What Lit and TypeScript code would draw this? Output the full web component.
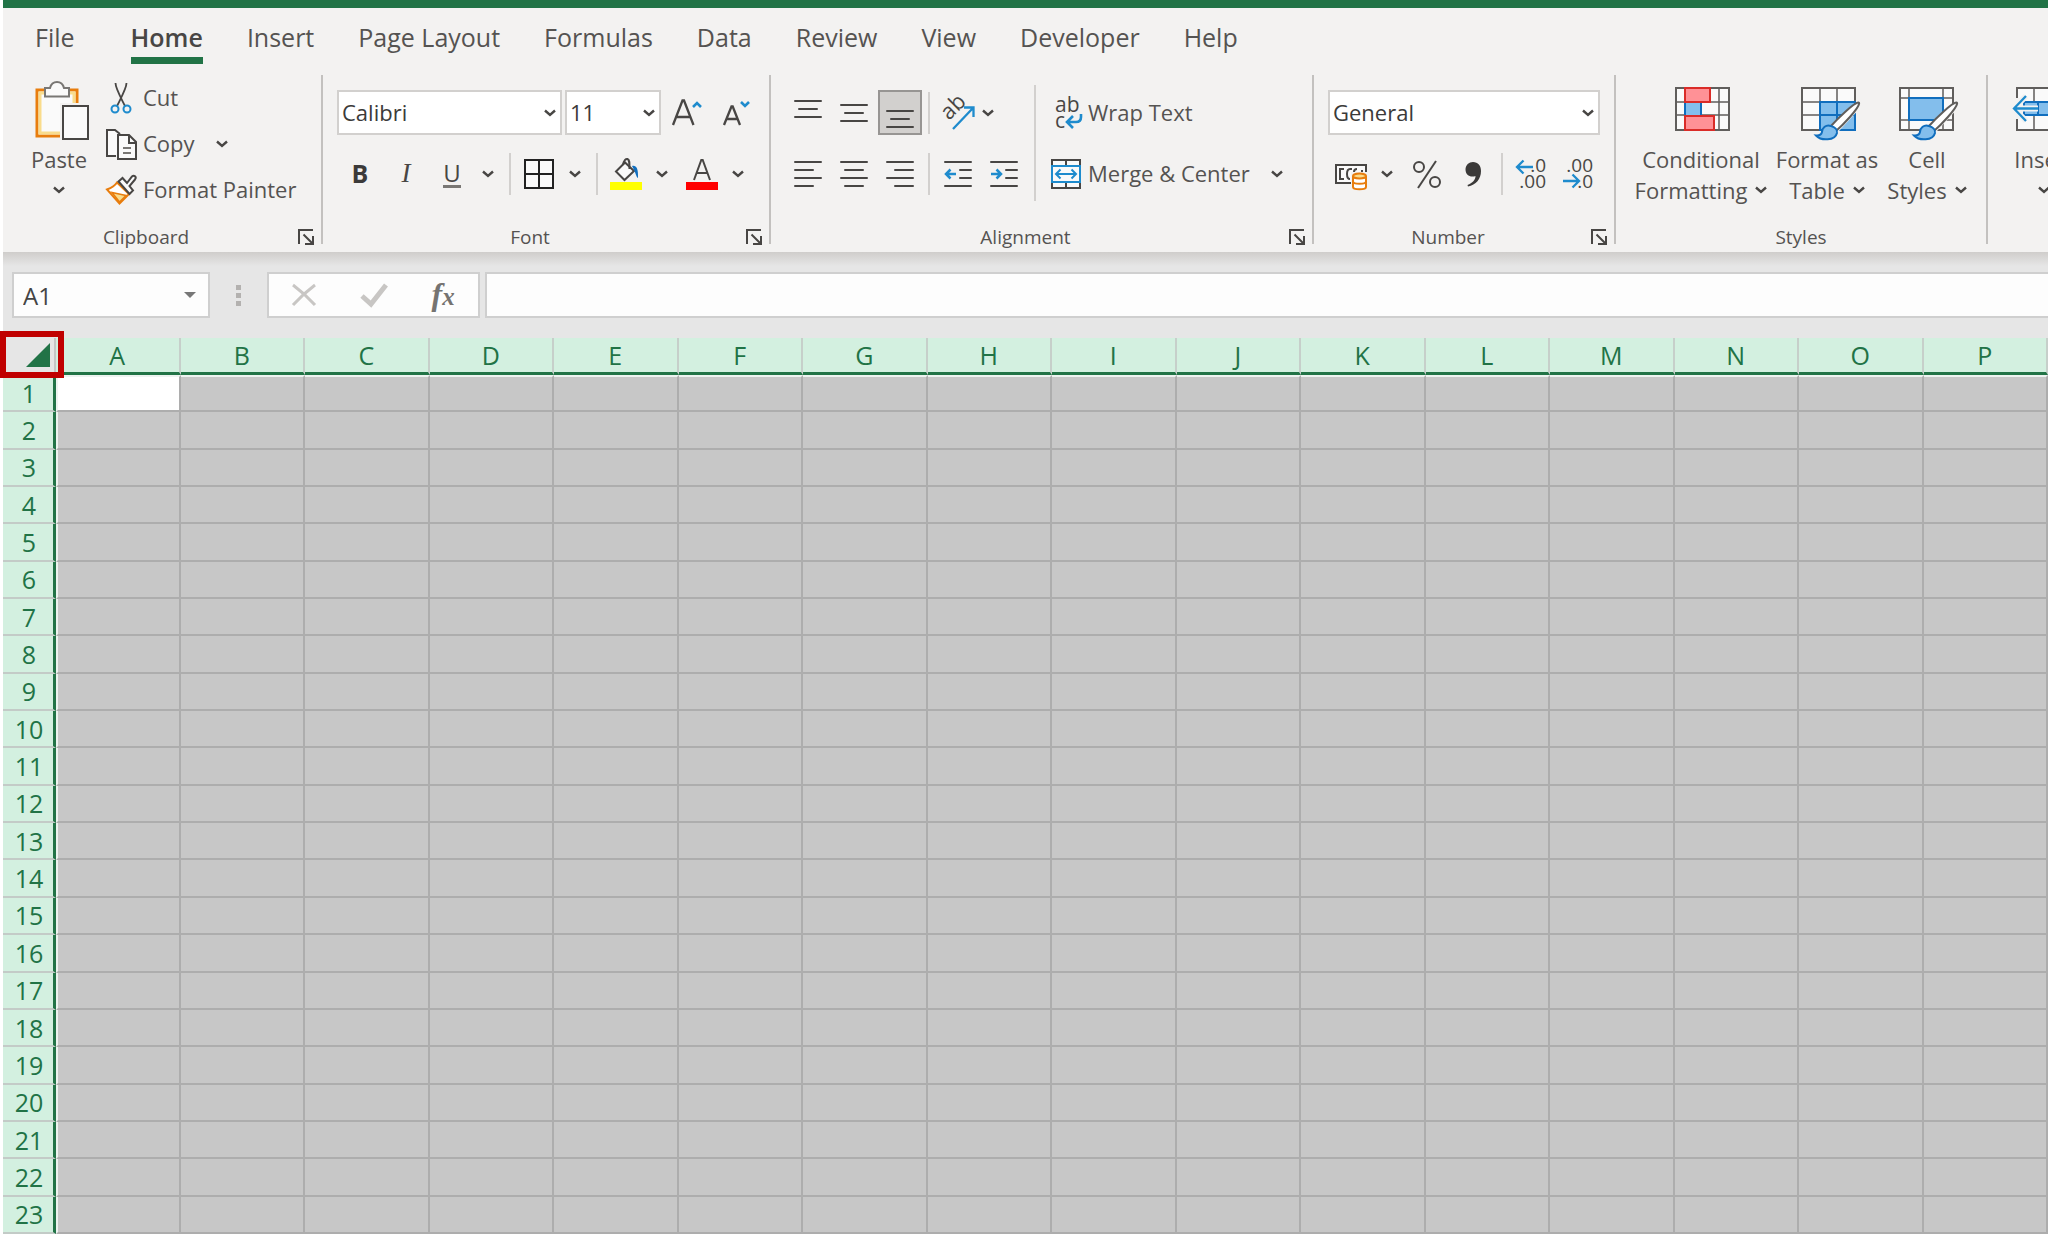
import { LitElement, html, svg, css, nothing, TemplateResult } from "lit";
import { customElement, property, state } from "lit/decorators.js";
import { classMap } from "lit/directives/class-map.js";

const INK = "#484644";
const BLUE = "#1e8bcd";
const GRID = "#605e5c";

const icon = (w: number, h: number, body: unknown) => html`<svg
  class="icon"
  width=${w}
  height=${h}
  viewBox="0 0 ${w} ${h}"
  fill="none"
  stroke=${INK}
  stroke-width="2"
  aria-hidden="true"
>${body}</svg>`;

const hLines = (rows: Array<[number, number, number]>) =>
  svg`${rows.map(([x1, x2, y]) => svg`<path d="M${x1} ${y}H${x2}" stroke-linecap="round"/>`)}`;

const brush = (dx: number) => svg`<g transform="translate(${dx} 0)">
  <path d="M62 20 L36 44 L30 47 Q25 49 24 55 L19 57 L30 62 L40 56 L42 50 L66 24Z" fill="#f3f2f1" stroke="none"/>
  <path d="M61 21.5 C57 22 41 37 34 45 L39 50 C47 43 61 28 62 23 C62.400 22 62 21.300 61 21.500Z" fill="#fff" stroke="${GRID}"/>
  <path d="M34 45 C29 43 25 47 25 51 Q24 55 19 54.500 C24 60 38 60 40 52 C40.500 49 38 46 34 45Z" fill="#83beec" stroke="#106ebe"/>
</g>`;

const icons: Record<string, TemplateResult> = {
  paste: icon(60, 60, svg`
    <rect x="8" y="9" width="40" height="46" fill="#fafafa" stroke="#e87d0d" stroke-width="3"/>
    <rect x="11" y="12" width="34" height="40" stroke="#f9dc8c" stroke-width="3"/>
    <path d="M16 15.500V7h5c1-4 3-6 7-6s6 2 7 6h5v8.500z" fill="#fafafa" stroke="#797774"/>
    <rect x="31" y="22" width="30" height="38" fill="#f3f2f1" stroke="none"/>
    <rect x="34" y="25" width="25" height="33" fill="#fafafa"/>`),
  cut: icon(32, 32, svg`
    <path d="M10.500 1c0 5 4 12 9.500 23M21.500 1c0 5-4 12-9.500 23" stroke-width="1.800"/>
    <circle cx="10" cy="27" r="3.500" stroke=${BLUE}/><circle cx="22" cy="27" r="3.500" stroke=${BLUE}/>`),
  copy: icon(32, 32, svg`
    <path d="M11 28H2V2h8l5 4" fill="#fafafa"/>
    <path d="M13 7h11l7 7v17H13z" fill="#fafafa"/><path d="M24 7v8h7"/>
    <path d="M18 20h8M18 25h8" stroke="#797774"/>`),
  painter: icon(32, 32, svg`
    <path d="M2 15.500Q9 13 12 8.500L24 20 14.500 29.500Z" fill="#fff" stroke="#e87d0d"/>
    <path d="M7 18.500l14 3-6.500 6.500z" fill="#f9dc8c" stroke="#e87d0d" stroke-width="1.500"/>
    <path d="M13.500 7.500l4-3.500 4.500 5 5-6.500c2-2 5 .500 3 3L24.500 12l3.500 4.500-3.500 3.500z" fill="#fafafa"/>`),
  grow: icon(32, 32, svg`
    <path d="M2 28L11.500 3.500h1.500L22.500 28M6 20h13" stroke-width="2.300"/>
    <path d="M22 10l4-4 4 4" stroke=${BLUE} stroke-width="2.600"/>`),
  shrink: icon(32, 32, svg`
    <path d="M4 28L11.500 9.500h1.200L20 28M7 22h10.500" stroke-width="2.300"/>
    <path d="M21 5l4 4 4-4" stroke=${BLUE} stroke-width="2.600"/>`),
  borders: icon(30, 30, svg`<rect x="1" y="1" width="28" height="28" fill="#fafafa" stroke="#222"/><path d="M15 1v28M1 15h28" stroke="#222"/>`),
  fill: icon(32, 32, svg`
    <path d="M6 13.500L15 4.500 24 13 14.500 22z" fill="#fafafa"/>
    <path d="M13 7c1-5 3-6.500 4.500-6 2 .700 2 3 2 10"/>
    <path d="M22 8c4-1 6.500 2 6 12-2-1-2-5-6-12z" fill="#106ebe" stroke="none"/>
    <rect x="0" y="24" width="32" height="8" fill="#ffff00" stroke="none"/>`),
  fontColor: icon(32, 32, svg`
    <path d="M8 22L15.300 2h1.400L24 22M11 15h10"/>
    <rect x="0" y="24" width="32" height="8" fill="#ff0000" stroke="none"/>`),
  top: icon(30, 32, hLines([[2, 28, 4], [6, 24, 12], [2, 28, 20]])),
  middle: icon(30, 32, hLines([[2, 28, 8], [6, 24, 16], [2, 28, 24]])),
  bottom: icon(30, 32, hLines([[2, 28, 14], [6, 24, 22], [2, 28, 30]])),
  left: icon(30, 32, hLines([[2, 28, 4], [2, 20, 12], [2, 28, 20], [2, 20, 28]])),
  center: icon(30, 32, hLines([[2, 28, 4], [6, 24, 12], [2, 28, 20], [6, 24, 28]])),
  right: icon(30, 32, hLines([[2, 28, 4], [10, 28, 12], [2, 28, 20], [10, 28, 28]])),
  outdent: icon(30, 32, svg`${hLines([[2, 28, 4], [17, 28, 12], [17, 28, 20], [2, 28, 28]])}
    <path d="M13 16H3M7.500 11.500L3 16l4.500 4.500" stroke=${BLUE} stroke-width="2.500"/>`),
  indent: icon(30, 32, svg`${hLines([[2, 28, 4], [17, 28, 12], [17, 28, 20], [2, 28, 28]])}
    <path d="M2 16H12M7.500 11.500L12 16l-4.500 4.500" stroke=${BLUE} stroke-width="2.500"/>`),
  orient: icon(34, 34, svg`
    <text x="8" y="25" transform="rotate(-45 8 25)" class="glyph" font-size="22">ab</text>
    <path d="M12 33L32 12M23 11.500h9.500V21" stroke=${BLUE} stroke-width="2.300"/>`),
  wrap: icon(32, 32, svg`
    <text x="5" y="15" class="glyph" font-size="21">ab</text><text x="5" y="31" class="glyph" font-size="21">c</text>
    <path d="M31 17v3q0 5-5 5h-8M23 19l-6 6 6 6" stroke=${BLUE} stroke-width="2.600"/>`),
  merge: icon(32, 32, svg`
    <rect x="2" y="2" width="28" height="28" fill="#fafafa"/><path d="M16 2v28"/>
    <rect x="2" y="8" width="28" height="16" fill="#fafafa" stroke=${BLUE}/>
    <path d="M6 16h20M10.500 11.500L6 16l4.500 4.500M21.500 11.500L26 16l-4.500 4.500" stroke=${BLUE}/>`),
  currency: icon(34, 32, svg`
    <rect x="2" y="7" width="30" height="18" fill="#fafafa"/>
    <path d="M10 11H6v10h4M18 11h-2q-3 0-3 5t3 5M20 14q0-3 3-3M28 12v3"/>
    <path d="M17 14h17v19H17z" fill="#f3f2f1" stroke="none"/>
    <path d="M19 18v11c0 3 13 3 13 0V18" fill="#fff" stroke="#e87d0d"/>
    <ellipse cx="25.500" cy="18" rx="6.500" ry="2.500" fill="#f9dc8c" stroke="#e87d0d"/>
    <path d="M19 23.500c0 3 13 3 13 0" stroke="#e87d0d"/>`),
  percent: icon(32, 32, svg`<circle cx="8" cy="9" r="5"/><circle cx="24" cy="24" r="5"/><path d="M25 3L7 30"/>`),
  comma: icon(32, 32, svg`<path d="M16 4c5 0 8 3.500 8 9 0 8-5 14-13 15.500l-.500-1.500c5-2 8-5 8-9-5 2-10-1-10-6.500C8.500 7 12 4 16 4z" fill="#3b3a39" stroke="none"/>`),
  incDecimal: icon(34, 34, svg`
    <text x="32" y="15" text-anchor="end" class="glyph" font-size="19">.0</text>
    <text x="32" y="31" text-anchor="end" class="glyph" font-size="19">.00</text>
    <path d="M19 10H3M9.500 3.500L3 10l6.500 6.500" stroke=${BLUE} stroke-width="2.300"/>`),
  decDecimal: icon(34, 34, svg`
    <text x="33" y="15" text-anchor="end" class="glyph" font-size="19">.00</text>
    <text x="33" y="31" text-anchor="end" class="glyph" font-size="19">.0</text>
    <path d="M3 24H19M12.500 17.500L19 24l-6.500 6.500" stroke=${BLUE} stroke-width="2.300"/>`),
  conditional: icon(60, 60, svg`
    <rect x="5" y="7" width="53" height="42" fill="#fafafa" stroke=${GRID}/>
    <path d="M5 21h53M5 34h53M14 7v42M48 7v42" stroke=${GRID} stroke-width="1.500"/>
    <rect x="31" y="22" width="16" height="11" fill="#fafafa" stroke="none"/>
    <rect x="14" y="21" width="16" height="14" fill="#83beec" stroke="#106ebe"/>
    <rect x="14" y="7" width="25" height="14" fill="#ff9196" stroke="#da2c28"/>
    <rect x="14" y="35" width="29" height="14" fill="#ff9196" stroke="#da2c28"/>`),
  formatTable: icon(60, 60, svg`
    <rect x="5" y="7" width="53" height="42" fill="#fafafa" stroke=${GRID}/>
    <path d="M5 21h53M5 34h18M23 7v42M40 7v14" stroke=${GRID} stroke-width="1.500"/>
    <rect x="23" y="21" width="35" height="28" fill="#83beec" stroke="#106ebe"/>
    <path d="M40 21v28M23 34h35" stroke="#106ebe"/>${brush(0)}`),
  cellStyles: icon(60, 60, svg`
    <rect x="3" y="7" width="53" height="42" fill="#fafafa" stroke=${GRID}/>
    <path d="M3 17h53M3 39h53M12 7v42M46 7v42" stroke=${GRID} stroke-width="1.500"/>
    <rect x="12" y="17" width="34" height="22" fill="#83beec" stroke="#106ebe"/>${brush(-2)}`),
  insertCells: icon(60, 60, svg`
    <rect x="3" y="7" width="53" height="42" fill="#fafafa" stroke=${GRID}/>
    <path d="M20 7v42M38 7v42M3 21h53M3 34h53" stroke=${GRID} stroke-width="1.500"/>
    <path d="M-3 17h13v21H-3z" fill="#f3f2f1" stroke="none"/>
    <rect x="10" y="21" width="46" height="13" fill="#83beec" stroke="#106ebe"/><path d="M24 21v13" stroke="#106ebe"/>
    <path d="M24 27.500H0M12 15L0 27.500 12 40" stroke="#f3f2f1" stroke-width="6"/>
    <path d="M24 27.500H0M12 15L0 27.500 12 40" stroke=${BLUE} stroke-width="2.300"/>`),
  chevron: icon(12, 8, svg`<path d="M1 1.500l5 4.500 5-4.500" stroke-width="2.400"/>`),
  launcher: icon(16, 16, svg`<path d="M1 15V1h14M5.500 5.500l9 9M15 7v8H7"/>`),
  cancel: icon(26, 26, svg`<path d="M2 3Q14 12 24 23M24 3Q12 12 2 23" stroke="#c8c6c4" stroke-width="3"/>`),
  check: icon(28, 26, svg`<path d="M2 14l9 8L26 3" stroke="#c8c6c4" stroke-width="5"/>`),
};

const base = css`
  * { box-sizing: border-box; }
  button, select, input {
    font: inherit;
    color: inherit;
    margin: 0;
    padding: 0;
    border: 0;
    border-radius: 0;
    background: none;
    outline: none;
  }
  .icon { display: block; flex: none; overflow: visible; }
  .glyph {
    font-family: "Open Sans", "Noto Sans", sans-serif;
    fill: #484644;
    stroke: none;
  }
`;

@customElement("ribbon-tabs")
class RibbonTabs extends LitElement {
  static styles = [base, css`
    :host { display: block; }
    .tabs { display: flex; gap: 44px; padding: 0 32px; margin-bottom: 11px; }
    .tab {
      height: 56px;
      padding-top: 8px;
      border-bottom: 7px solid transparent;
      font-size: 25px;
      line-height: 40px;
      color: #555351;
      white-space: nowrap;
    }
    .file { margin-right: 12px; }
    .active { border-color: #217346; font-weight: 600; color: #484644; }
  `];
  @state() private active = "Home";
  private names = ["File", "Home", "Insert", "Page Layout", "Formulas", "Data", "Review", "View", "Developer", "Help"];
  render() {
    return html`<nav class="tabs" role="tablist">
      ${this.names.map((n) => html`<button
        role="tab"
        aria-selected=${n === this.active}
        class=${classMap({ tab: true, file: n === "File", active: n === this.active })}
        @click=${() => (this.active = n)}
      >${n}</button>`)}
    </nav>`;
  }
}

@customElement("ribbon-group")
class RibbonGroup extends LitElement {
  @property() label = "";
  @property({ type: Boolean }) launcher = false;
  static styles = [base, css`
    :host { display: flex; flex-direction: column; flex: none; }
    .body { height: 149px; display: flex; }
    .foot { display: flex; align-items: center; height: 26px; }
    .name { flex: 1; text-align: center; font-size: 19px; line-height: 26px; color: #555351; }
    .launch { width: 16px; height: 16px; margin: 0 7px 0 9px; }
  `];
  render() {
    return html`<div class="body"><slot></slot></div>
      <div class="foot">
        <span class="name">${this.label}</span>
        ${this.launcher ? html`<button class="launch" aria-label="${this.label} settings">${icons.launcher}</button>` : nothing}
      </div>`;
  }
}

@customElement("excel-ribbon")
class ExcelRibbon extends LitElement {
  static styles = [base, css`
    :host { display: block; height: 177px; color: #555351; font-size: 22px; }
    .ribbon { display: flex; height: 177px; }
    .divider { flex: none; width: 2px; height: 169px; background: #c3c1bf; }
    .clipboard { width: 318px; }
    .font { width: 446px; }
    .alignment { width: 541px; }
    .number { width: 300px; }
    .styles { width: 370px; }
    .cells { width: 200px; }

    .big {
      display: flex;
      flex-direction: column;
      align-items: center;
      gap: 3px;
      padding-top: 6px;
      line-height: 31px;
      white-space: nowrap;
    }
    .lines { display: flex; flex-direction: column; align-items: center; }
    .line { display: flex; align-items: center; justify-content: center; gap: 8px; height: 31px; }
    .line .icon { margin-bottom: 2px; }
    .w-paste { width: 80px; margin-left: 16px; }
    .w-cond { width: 138px; margin-left: 16px; }
    .w-table { width: 114px; }
    .w-cell { width: 86px; }
    .w-insert { width: 80px; margin-left: 16px; }

    .list { display: flex; flex-direction: column; margin-left: 6px; }
    .item { display: flex; align-items: center; height: 46px; }
    .command { display: flex; align-items: center; gap: 6px; white-space: nowrap; }
    .command span { padding-bottom: 2px; }

    .stack { display: flex; flex-direction: column; gap: 18px; padding: 15px 0 0 14px; }
    .row { display: flex; align-items: center; height: 45px; }
    .row.second { height: 42px; }
    .row.fields { gap: 3px; }
    .tool { display: flex; align-items: center; justify-content: center; flex: none; width: 46px; height: 42px; }
    .tool.on { width: 44px; height: 45px; margin: 0 1px; background: #d2d0ce; border: 2px solid #979593; }
    .drop { display: flex; align-items: center; justify-content: center; flex: none; width: 26px; height: 42px; }
    .drop.near { width: 14px; }
    .drop.apart { margin-left: 14px; }
    .gap { margin-left: 4px; }
    .vsep { flex: none; width: 2px; height: 42px; margin: 0 5px; background: #d2d0ce; }
    .drop + .vsep { margin-left: 8px; }
    .long { flex: none; width: 2px; height: 116px; margin: 10px 0 0 7px; background: #d2d0ce; }

    .combo { display: grid; flex: none; align-items: center; }
    .combo select, .combo .icon { grid-area: 1 / 1; }
    .combo .icon { justify-self: end; margin-right: 6px; pointer-events: none; }
    .combo select {
      appearance: none;
      width: 100%;
      height: 45px;
      padding: 0 3px 2px;
      border: 2px solid #d2d0ce;
      background: #fff;
      color: #3b3a39;
    }
    .family { width: 225px; }
    .size { width: 96px; }
    .format { width: 272px; }

    .bold { font-size: 25px; font-weight: 700; color: #3b3a39; padding-bottom: 2px; }
    .italic { font: italic 27px "Liberation Serif", serif; color: #484644; padding-bottom: 2px; }
    .under span { font-size: 24px; line-height: 24px; border-bottom: 3px solid #797774; color: #484644; }
  `];

  private tool(name: string, label: string, cls = "") {
    return html`<button class="tool ${cls}" aria-label=${label}>${icons[name]}</button>`;
  }
  private drop(label: string, cls = "") {
    return html`<button class="drop ${cls}" aria-label="${label} options">${icons.chevron}</button>`;
  }
  private combo(label: string, cls: string, options: string[]) {
    return html`<label class="combo ${cls}">
      <select aria-label=${label}>${options.map((o) => html`<option>${o}</option>`)}</select>
      ${icons.chevron}
    </label>`;
  }
  private big(name: string, cls: string, first: string, second = "") {
    return html`<button class="big ${cls}">
      ${icons[name]}
      <span class="lines"><span class="line">${first}</span><span class="line">${second ? html`<span>${second}</span>` : nothing}${icons.chevron}</span></span>
    </button>`;
  }
  private command(name: string, text: string) {
    return html`<button class="command">${icons[name]}<span>${text}</span></button>`;
  }

  render() {
    return html`<div class="ribbon">
      <ribbon-group class="clipboard" label="Clipboard" launcher>
        ${this.big("paste", "w-paste", "Paste")}
        <div class="list">
          <div class="item">${this.command("cut", "Cut")}</div>
          <div class="item">${this.command("copy", "Copy")}${this.drop("Copy", "apart")}</div>
          <div class="item">${this.command("painter", "Format Painter")}</div>
        </div>
      </ribbon-group>
      <div class="divider"></div>

      <ribbon-group class="font" label="Font" launcher>
        <div class="stack">
          <div class="row fields">
            ${this.combo("Font", "family", ["Calibri"])}
            ${this.combo("Font size", "size", ["11"])}
            ${this.tool("grow", "Increase font size")}
            ${this.tool("shrink", "Decrease font size")}
          </div>
          <div class="row second">
            <button class="tool bold">B</button>
            <button class="tool italic">I</button>
            <button class="tool under"><span>U</span></button>
            ${this.drop("Underline")}
            <div class="vsep"></div>
            ${this.tool("borders", "Borders")}${this.drop("Borders")}
            <div class="vsep"></div>
            ${this.tool("fill", "Fill color")}${this.drop("Fill color")}
            ${this.tool("fontColor", "Font color", "gap")}${this.drop("Font color")}
          </div>
        </div>
      </ribbon-group>
      <div class="divider"></div>

      <ribbon-group class="alignment" label="Alignment" launcher>
        <div class="stack">
          <div class="row">
            ${this.tool("top", "Top align")}${this.tool("middle", "Middle align")}${this.tool("bottom", "Bottom align", "on")}
            <div class="vsep"></div>
            ${this.tool("orient", "Orientation")}${this.drop("Orientation", "near")}
          </div>
          <div class="row second">
            ${this.tool("left", "Align left")}${this.tool("center", "Center")}${this.tool("right", "Align right")}
            <div class="vsep"></div>
            ${this.tool("outdent", "Decrease indent")}${this.tool("indent", "Increase indent")}
          </div>
        </div>
        <div class="long"></div>
        <div class="stack">
          <div class="row">${this.command("wrap", "Wrap Text")}</div>
          <div class="row second">${this.command("merge", "Merge & Center")}${this.drop("Merge", "apart")}</div>
        </div>
      </ribbon-group>
      <div class="divider"></div>

      <ribbon-group class="number" label="Number" launcher>
        <div class="stack">
          <div class="row">${this.combo("Number format", "format", ["General"])}</div>
          <div class="row second">
            ${this.tool("currency", "Accounting format")}${this.drop("Accounting format")}
            ${this.tool("percent", "Percent style", "gap")}${this.tool("comma", "Comma style")}
            <div class="vsep"></div>
            ${this.tool("incDecimal", "Increase decimal")}${this.tool("decDecimal", "Decrease decimal")}
          </div>
        </div>
      </ribbon-group>
      <div class="divider"></div>

      <ribbon-group class="styles" label="Styles">
        ${this.big("conditional", "w-cond", "Conditional", "Formatting")}
        ${this.big("formatTable", "w-table", "Format as", "Table")}
        ${this.big("cellStyles", "w-cell", "Cell", "Styles")}
      </ribbon-group>
      <div class="divider"></div>

      <ribbon-group class="cells">
        ${this.big("insertCells", "w-insert", "Insert")}
      </ribbon-group>
    </div>`;
  }
}

@customElement("formula-bar")
class FormulaBar extends LitElement {
  static styles = [base, css`
    :host { display: block; }
    .bar {
      display: flex;
      padding: 20px 0 20px 9px;
      background: linear-gradient(#cfcdcb, #e6e6e6 14px);
    }
    .box { display: flex; align-items: center; flex: none; height: 46px; background: #fdfdfd; border: 2px solid #cfcfcf; }
    .name { width: 198px; font-size: 24px; color: #444; }
    .name input { flex: 1; min-width: 0; height: 42px; padding-left: 9px; }
    .arrow { width: 36px; height: 42px; display: flex; align-items: center; justify-content: center; }
    .dots { display: flex; flex-direction: column; align-items: center; justify-content: center; gap: 3px; width: 57px; }
    .dot { width: 5px; height: 5px; background: #b3b1af; }
    .actions { width: 213px; }
    .action { display: flex; align-items: center; justify-content: center; width: 70px; height: 42px; }
    .fx { font: italic 700 32px/32px "Liberation Serif", serif; color: #757371; }
    .fx small { font-size: 25px; }
    .formula { flex: 1; margin-left: 5px; border-right: 0; }
    .formula input { flex: 1; height: 42px; padding: 0 8px; }
  `];
  render() {
    return html`<div class="bar">
      <div class="box name">
        <input aria-label="Name box" .value=${"A1"} />
        <button class="arrow" aria-label="Named ranges">${icon(12, 6, svg`<path d="M0 0h12L6 6z" fill="#777" stroke="none"/>`)}</button>
      </div>
      <div class="dots"><span class="dot"></span><span class="dot"></span><span class="dot"></span></div>
      <div class="box actions">
        <button class="action" aria-label="Cancel">${icons.cancel}</button>
        <button class="action" aria-label="Enter">${icons.check}</button>
        <button class="action fx" aria-label="Insert function"><span>f<small>x</small></span></button>
      </div>
      <div class="box formula"><input aria-label="Formula bar" /></div>
    </div>`;
  }
}

@customElement("sheet-grid")
class SheetGrid extends LitElement {
  static styles = [base, css`
    :host { display: block; position: relative; min-height: 0; }
    .sheet {
      table-layout: fixed;
      width: 100%;
      height: 100%;
      border-collapse: separate;
      border-spacing: 0;
      font-size: 25px;
      line-height: 30px;
      color: #217346;
    }
    th { padding: 0; font-weight: 400; background: #d3f0e0; text-align: center; }
    td { padding: 0; background: #c7c7c7; border-right: 2px solid #adadad; border-bottom: 2px solid #adadad; }
    .head { height: 37px; }
    .corner { width: 53px; background: #e6e6e6; border-right: 2px solid #c6c6c6; border-bottom: 3px solid #217346; }
    .all { display: flex; justify-content: flex-end; width: 100%; padding: 0 4px 0 0; }
    .col { border-right: 2px solid #c6cfca; border-bottom: 3px solid #217346; }
    .num { padding-left: 2px; border-right: 3px solid #217346; border-bottom: 2px solid #c3cbc7; }
    .first { border-left: 2px solid #edf3f0; }
    .upper { border-top: 2px solid #edf3f0; }
    .current { background: #fff; }
    .callout {
      position: absolute;
      left: -3px;
      top: -7px;
      width: 64px;
      height: 47px;
      border: 6px solid #c00000;
      pointer-events: none;
    }
  `];
  private cols = [..."ABCDEFGHIJKLMNOP"];
  private rows = Array.from({ length: 23 }, (_, i) => i + 1);
  render() {
    return html`<table class="sheet">
        <thead>
          <tr class="head">
            <th class="corner"><button class="all" aria-label="Select all">${icon(24, 24, svg`<path d="M24 0v24H0z" fill="#217346" stroke="none"/>`)}</button></th>
            ${this.cols.map((c) => html`<th class="col" scope="col">${c}</th>`)}
          </tr>
        </thead>
        <tbody>
          ${this.rows.map((r) => html`<tr>
            <th class="num" scope="row">${r}</th>
            ${this.cols.map((_, i) => html`<td class=${classMap({ first: i === 0, upper: r === 1, current: i === 0 && r === 1 })}></td>`)}
          </tr>`)}
        </tbody>
      </table>
      <div class="callout"></div>`;
  }
}

@customElement("app-root")
class AppRoot extends LitElement {
  static styles = css`
    :host {
      display: flex;
      flex-direction: column;
      height: 100vh;
      padding: 0 0 2px 3px;
      box-sizing: border-box;
      overflow: hidden;
      background: #fff;
      font-family: "Open Sans", "Noto Sans", sans-serif;
    }
    .top { flex: none; border-top: 8px solid #217346; background: #f3f2f1; }
    .bar { flex: none; }
    .grid { flex: 1; }
  `;
  render() {
    return html`
      <header class="top">
        <ribbon-tabs></ribbon-tabs>
        <excel-ribbon></excel-ribbon>
      </header>
      <formula-bar class="bar"></formula-bar>
      <sheet-grid class="grid"></sheet-grid>
    `;
  }
}
